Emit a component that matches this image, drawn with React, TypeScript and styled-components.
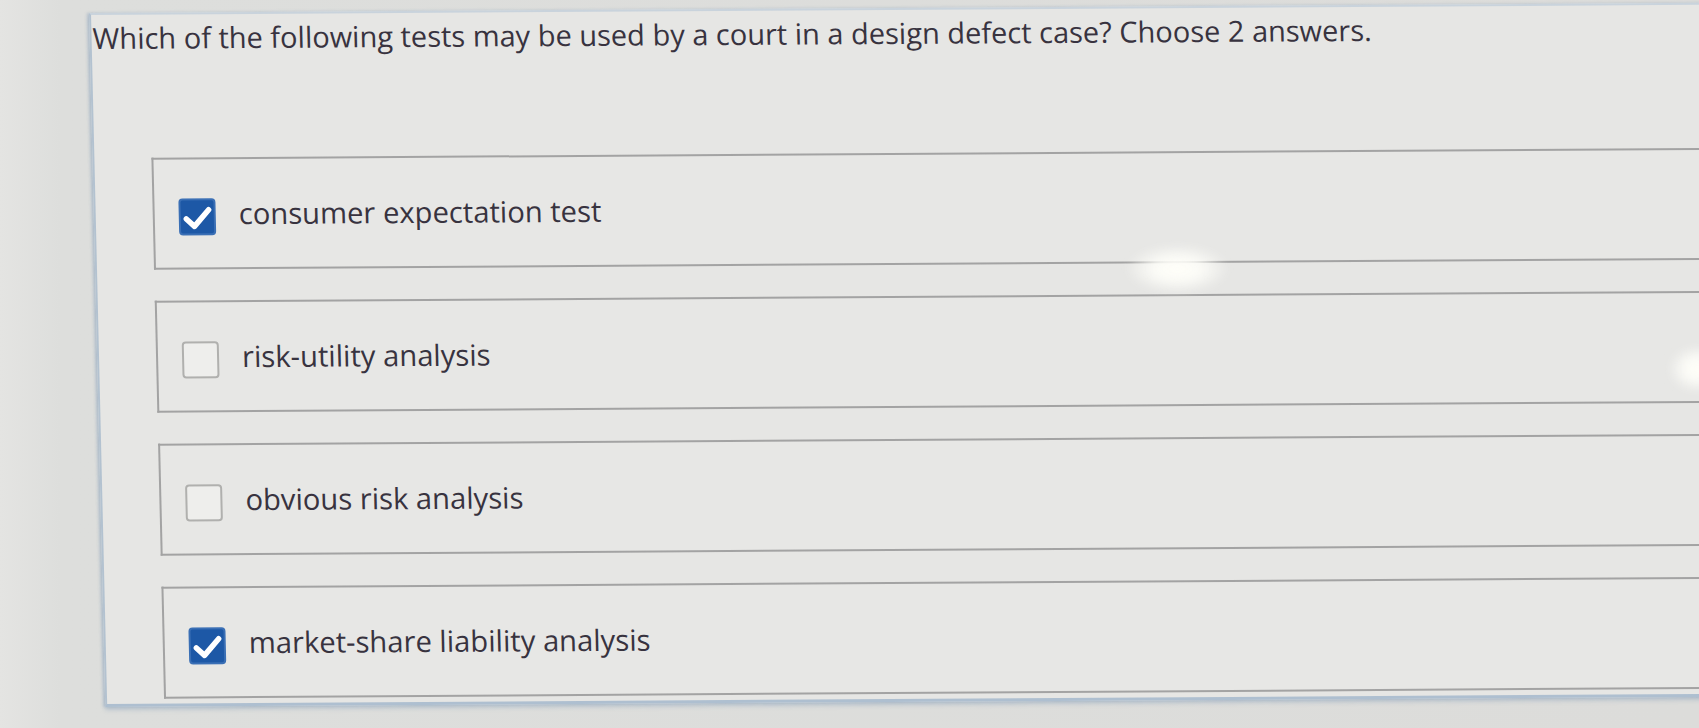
import React from "react";
import styled, { createGlobalStyle } from "styled-components";

const Global = createGlobalStyle`
  html, body {
    margin: 0;
    padding: 0;
    background: #dedfdd;
    overflow: hidden;
  }
  body {
    font-family: "Open Sans", "Noto Sans", "Liberation Sans", sans-serif;
    color: #3b3641;
  }
`;

const Page = styled.div`
  width: 1699px;
  height: 728px;
  padding: 13px 0 0 89px;
  box-sizing: border-box;
  position: relative;
  overflow: hidden;
  background: linear-gradient(90deg, #e4e4e2 0px, #dddedc 60px, #dcdcda 100%);
`;

/* The quiz card; the slight shear mimics the camera angle of the screen. */
const Card = styled.section`
  width: 1680px;
  height: 694px;
  box-sizing: border-box;
  background: #e6e6e4;
  border-top: 2px solid #c9d3dc;
  border-left: 2px solid #b3c2d0;
  border-bottom: 3px solid #aebfd0;
  box-shadow: -2px 0 3px rgba(120, 150, 180, 0.35), 0 3px 4px rgba(120, 150, 180, 0.35);
  transform-origin: 0 0;
  transform: matrix(1, -0.0063, 0.0234, 1, 0, 0);
  padding: 4px 0 0 1px;
  display: flex;
  flex-direction: column;
`;

const Question = styled.h1`
  margin: 0;
  font-size: 29px;
  line-height: 38px;
  font-weight: 400;
  color: #38333f;
`;

const Options = styled.div`
  margin: 101px 0 0 56px;
  display: flex;
  flex-direction: column;
  gap: 31px;
`;

const Option = styled.label`
  height: 112px;
  box-sizing: border-box;
  border: 2px solid #a3a3a3;
  border-right: none;
  background: #e7e7e5;
  display: flex;
  align-items: center;
  padding-left: 24px;
  gap: 23px;
`;

const Box = styled.span<{ $checked: boolean }>`
  width: 37px;
  height: 37px;
  box-sizing: border-box;
  flex: none;
  margin-top: 7px;
  border-radius: 4px;
  display: flex;
  align-items: center;
  justify-content: center;
  background: ${(p) => (p.$checked ? "#1d58a6" : "#eeeeec")};
  border: ${(p) => (p.$checked ? "2px solid #3a6fb5" : "2px solid #b0b0ae")};
`;

const Label = styled.span`
  font-size: 29.2px;
  line-height: 38px;
  color: #38333f;
`;

const Glare = styled.div<{ $x: number; $y: number; $w: number; $h: number }>`
  position: absolute;
  left: ${(p) => p.$x}px;
  top: ${(p) => p.$y}px;
  width: ${(p) => p.$w}px;
  height: ${(p) => p.$h}px;
  border-radius: 50%;
  background: radial-gradient(closest-side, #fffef8 0%, rgba(255, 255, 250, 0.85) 45%, rgba(255, 255, 250, 0) 100%);
  filter: blur(4px);
  pointer-events: none;
`;

const Check = () => (
  <svg width="33" height="33" viewBox="0 0 33 33" aria-hidden="true">
    <path
      d="M5.5 18.5 L13.5 26 L28 9.5"
      fill="none"
      stroke="#ffffff"
      strokeWidth="5.5"
      strokeLinecap="round"
      strokeLinejoin="round"
    />
  </svg>
);

const answers = [
  { text: "consumer expectation test", checked: true },
  { text: "risk-utility analysis", checked: false },
  { text: "obvious risk analysis", checked: false },
  { text: "market-share liability analysis", checked: true },
];

export default function App() {
  return (
    <>
      <Global />
      <Page>
        <Card>
          <Question>
            Which of the following tests may be used by a court in a design defect case? Choose 2 answers.
          </Question>
          <Options>
            {answers.map((a) => (
              <Option key={a.text}>
                <Box $checked={a.checked}>{a.checked && <Check />}</Box>
                <Label>{a.text}</Label>
              </Option>
            ))}
          </Options>
        </Card>
        <Glare $x={1125} $y={244} $w={105} $h={50} />
        <Glare $x={1668} $y={345} $w={60} $h={48} />
      </Page>
    </>
  );
}
